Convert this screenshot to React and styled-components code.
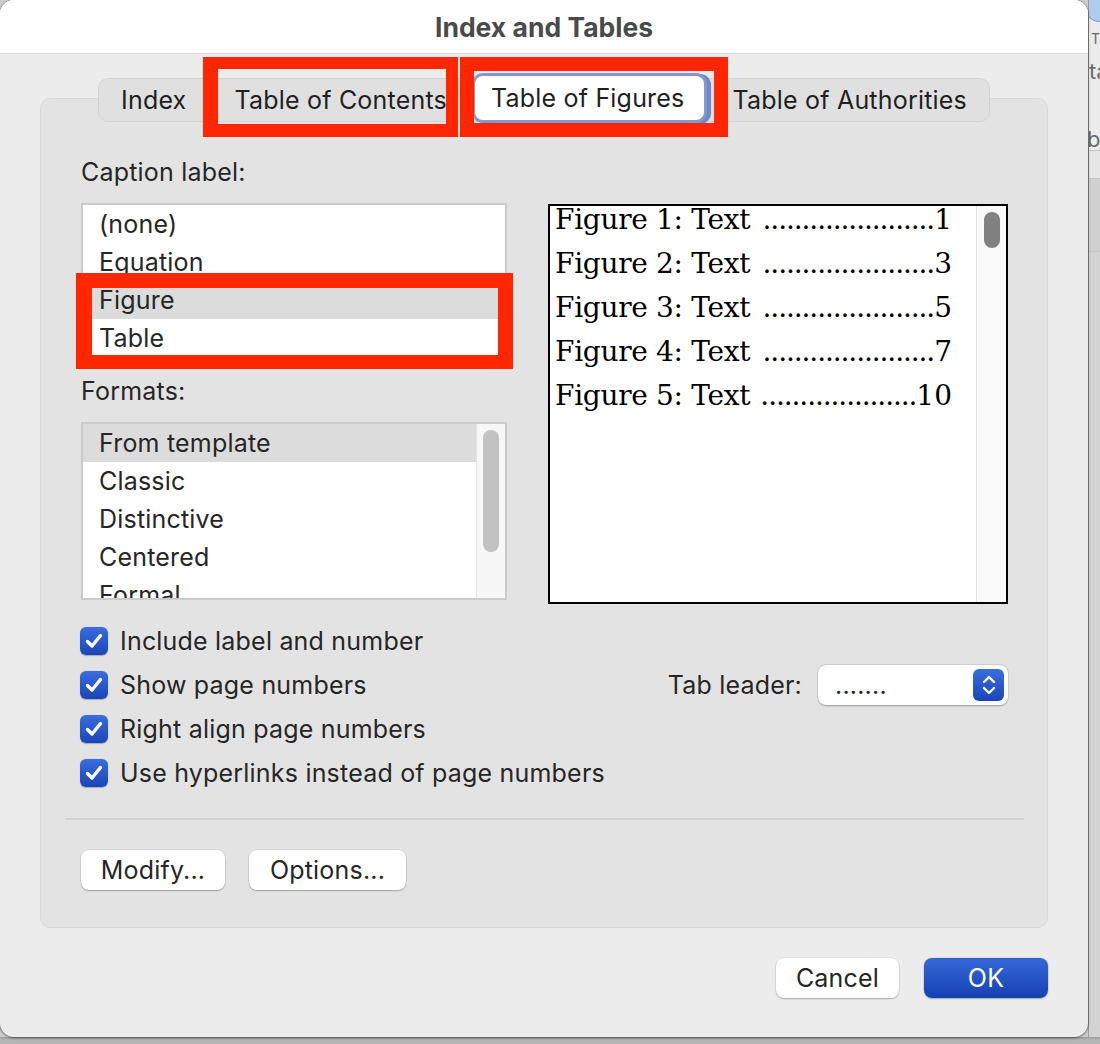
import React from "react";
import styled, { createGlobalStyle } from "styled-components";

const Global = createGlobalStyle`
  html, body { margin: 0; padding: 0; }
  body {
    background: #b4b4b4;
    font-family: Inter, "Noto Sans", "Liberation Sans", sans-serif;
    -webkit-font-smoothing: antialiased;
  }
`;

const Screen = styled.div`
  position: relative;
  width: 1100px;
  height: 1044px;
  overflow: hidden;
  display: flex;
  flex-direction: column;
`;

const TopRow = styled.div`
  display: flex;
  height: 1037px;
  flex: none;
  background: #cdcdcd;
`;

const Bottom = styled.div`
  flex: 1;
  background: linear-gradient(#9a9a9a, #b5b5b5 40%);
`;

const Dialog = styled.div`
  position: relative;
  z-index: 1;
  width: 1088px;
  flex: none;
  background: #ececec;
  border-radius: 14px;
  overflow: hidden;
  box-shadow: 0 0 0 1px rgba(0, 0, 0, 0.2), 0 1px 3px rgba(0, 0, 0, 0.35);
  display: flex;
  flex-direction: column;
`;

const TitleBar = styled.div`
  height: 53px;
  flex: none;
  background: #ffffff;
  border-bottom: 1px solid #d7d7d7;
  display: flex;
  align-items: center;
  justify-content: center;
  font-size: 26.5px;
  font-weight: 700;
  color: #4a4a4a;
`;

const Body = styled.div`
  padding: 24px 40px 0;
  display: flex;
  flex-direction: column;
`;

const Tabs = styled.div`
  position: relative;
  z-index: 2;
  align-self: center;
  width: 892px;
  height: 44px;
  margin-bottom: -24px;
  box-sizing: border-box;
  padding: 0 2px;
  display: flex;
  justify-content: space-between;
  background: #e0e0e0;
  border: 1px solid #d3d3d3;
  border-radius: 10px;
`;

const Tab = styled.div`
  display: flex;
  align-items: center;
  padding: 0 20px;
  font-size: 25px;
  letter-spacing: 0.2px;
  color: #1f1f1f;
  white-space: nowrap;
  ${(p) =>
    p.$active &&
    `
    background: #ffffff;
    border-radius: 8px;
    height: 44px;
    margin-top: -3px;
    padding: 0 20px 0 16px;
    box-shadow: 0 0 0 3px #8198d2, 4px 1px 0 3px #6f87c7;
  `}
`;

const Panel = styled.div`
  background: #e3e3e3;
  border: 1px solid #d8d8d8;
  border-radius: 10px;
  padding: 58px 39px 37px 40px;
  display: flex;
  flex-direction: column;
`;

const Columns = styled.div`
  display: grid;
  grid-template-columns: 426px 460px;
  column-gap: 41px;
`;

const Column = styled.div`
  display: flex;
  flex-direction: column;
`;

const Label = styled.div`
  font-size: 25px;
  letter-spacing: 0.2px;
  line-height: 30px;
  color: #262626;
  margin-top: ${(p) => p.$mt || 0}px;
`;

const ListBox = styled.div`
  margin-top: 16px;
  height: ${(p) => p.$h}px;
  box-sizing: border-box;
  border: 2px solid #cbcbcb;
  background: #ffffff;
  display: flex;
  overflow: hidden;
`;

const Items = styled.div`
  flex: 1;
`;

const Item = styled.div`
  height: 38px;
  line-height: 38px;
  padding-left: 16px;
  font-size: 25px;
  letter-spacing: 0.2px;
  color: #262626;
  white-space: nowrap;
  background: ${(p) => (p.$selected ? "#dcdcdc" : "transparent")};
`;

const Track = styled.div`
  flex: none;
  width: ${(p) => p.$w}px;
  box-sizing: border-box;
  background: ${(p) => p.$bg};
  border-left: 1px solid #e3e3e3;
  display: flex;
  justify-content: center;
`;

const Thumb = styled.div`
  width: 16px;
  height: ${(p) => p.$h}px;
  margin-top: 6px;
  border-radius: 8px;
  background: ${(p) => p.$c};
`;

const Preview = styled.div`
  margin-top: 47px;
  height: 400px;
  box-sizing: border-box;
  border: 2px solid #000000;
  background: #ffffff;
  display: flex;
  overflow: hidden;
`;

const PreviewText = styled.div`
  flex: 1;
  min-width: 0;
  padding: 0 24px 0 5px;
  margin-top: -8px;
  font-family: "DejaVu Serif", "Liberation Serif", serif;
  font-size: 28px;
  line-height: 44px;
  color: #000000;
`;

const Entry = styled.div`
  display: flex;
  white-space: nowrap;
`;

const EntryLabel = styled.span`
  margin-right: 5px;
  letter-spacing: -0.3px;
`;

const Leader = styled.span`
  flex: 1;
  overflow: hidden;
  direction: rtl;
  letter-spacing: -1.1px;
`;

const Checks = styled.div`
  margin-top: 15px;
  display: flex;
  flex-direction: column;
`;

const CheckRow = styled.div`
  height: 44px;
  display: flex;
  align-items: center;
  justify-content: space-between;
`;

const CheckLabel = styled.label`
  display: flex;
  align-items: center;
  gap: 12px;
  font-size: 25px;
  letter-spacing: 0.2px;
  color: #262626;
`;

const Box = styled.span`
  width: 28px;
  height: 28px;
  margin-left: -1px;
  border-radius: 6px;
  background: linear-gradient(#3a6ddf, #1a45b6);
  box-shadow: 0 0.5px 1px rgba(0, 0, 0, 0.25);
  display: flex;
  align-items: center;
  justify-content: center;
`;

const LeaderField = styled.div`
  display: flex;
  align-items: center;
  gap: 16px;
  font-size: 25px;
  letter-spacing: 0.2px;
  color: #262626;
`;

const Popup = styled.div`
  width: 190px;
  height: 40px;
  box-sizing: border-box;
  padding: 0 4px 0 17px;
  background: #ffffff;
  border-radius: 8px;
  box-shadow: 0 0.5px 1.5px rgba(0, 0, 0, 0.3), 0 0 0 0.5px rgba(0, 0, 0, 0.08);
  display: flex;
  align-items: center;
  justify-content: space-between;
  font-size: 25px;
  color: #262626;
`;

const Stepper = styled.span`
  width: 31px;
  height: 32px;
  border-radius: 6px;
  background: linear-gradient(#3a6ddf, #1a45b6);
  display: flex;
  align-items: center;
  justify-content: center;
`;

const Separator = styled.div`
  margin: 23px -16px 0;
  height: 2px;
  background: #d0d0d0;
`;

const ButtonRow = styled.div`
  margin-top: ${(p) => p.$mt}px;
  display: flex;
  justify-content: ${(p) => p.$justify || "flex-start"};
  gap: ${(p) => p.$gap}px;
`;

const Button = styled.button`
  width: ${(p) => p.$w}px;
  height: 40px;
  padding: 0;
  border: none;
  border-radius: 8px;
  font-family: inherit;
  font-size: 25px;
  letter-spacing: 0.2px;
  color: ${(p) => (p.$primary ? "#ffffff" : "#262626")};
  background: ${(p) =>
    p.$primary ? "linear-gradient(#3667d8, #1542b1)" : "#ffffff"};
  box-shadow: 0 1px 1.5px rgba(0, 0, 0, 0.25), 0 0 0 0.5px rgba(0, 0, 0, 0.1);
`;

const Strip = styled.div`
  flex: 1;
  overflow: hidden;
  display: flex;
  flex-direction: column;
  background: #d3d3d3;
  border-left: 1px solid #9c9c9c;
`;

const StripTop = styled.div`
  height: 150px;
  flex: none;
  background: #ececec;
  display: flex;
  flex-direction: column;
  border-bottom: 1px solid #c4c4c4;
`;

const Blob = styled.div`
  width: 26px;
  height: 26px;
  margin: -6px 0 0 -4px;
  border-radius: 50%;
  background: #b3cbed;
  border: 1px solid #6f93cc;
`;

const Frag = styled.div`
  margin: ${(p) => p.$m};
  font-size: ${(p) => p.$fs}px;
  color: #6b6b6b;
  white-space: nowrap;
  line-height: 1;
`;

const StripBand = styled.div`
  height: ${(p) => p.$h}px;
  flex: none;
  background: ${(p) => p.$bg};
  border-bottom: 1px solid #c6c6c6;
`;

const Mark = styled.div`
  position: absolute;
  z-index: 10;
  box-sizing: border-box;
  border-style: solid;
  border-color: #ff2600;
`;

const Check = () => (
  <svg width="22" height="22" viewBox="0 0 22 22">
    <path
      d="M4.5 11.5 L9 16 L17.5 5.5"
      fill="none"
      stroke="#fff"
      strokeWidth="3.4"
      strokeLinecap="round"
      strokeLinejoin="round"
    />
  </svg>
);

const Chevrons = () => (
  <svg width="18" height="26" viewBox="0 0 18 26">
    <path
      d="M4 10 L9 5 L14 10 M4 16 L9 21 L14 16"
      fill="none"
      stroke="#fff"
      strokeWidth="2.4"
      strokeLinecap="round"
      strokeLinejoin="round"
    />
  </svg>
);

const entries = [
  ["Figure 1: Text", "1", 22],
  ["Figure 2: Text", "3", 22],
  ["Figure 3: Text", "5", 22],
  ["Figure 4: Text", "7", 22],
  ["Figure 5: Text", "10", 20],
];

const checks = [
  "Include label and number",
  "Show page numbers",
  "Right align page numbers",
  "Use hyperlinks instead of page numbers",
];

export default function App() {
  return (
    <Screen>
      <Global />
      <TopRow>
        <Dialog>
          <TitleBar>Index and Tables</TitleBar>
          <Body>
            <Tabs>
              <Tab>Index</Tab>
              <Tab>Table of Contents</Tab>
              <Tab $active>Table of Figures</Tab>
              <Tab>Table of Authorities</Tab>
            </Tabs>
            <Panel>
              <Columns>
                <Column>
                  <Label>Caption label:</Label>
                  <ListBox $h={156}>
                    <Items>
                      <Item>(none)</Item>
                      <Item>Equation</Item>
                      <Item $selected>Figure</Item>
                      <Item>Table</Item>
                    </Items>
                  </ListBox>
                  <Label $mt={17}>Formats:</Label>
                  <ListBox $h={178}>
                    <Items>
                      <Item $selected>From template</Item>
                      <Item>Classic</Item>
                      <Item>Distinctive</Item>
                      <Item>Centered</Item>
                      <Item>Formal</Item>
                    </Items>
                    <Track $w={29} $bg="#f7f7f7">
                      <Thumb $h={122} $c="#c2c2c2" />
                    </Track>
                  </ListBox>
                </Column>
                <Column>
                  <Preview>
                    <PreviewText>
                      {entries.map(([t, n, d]) => (
                        <Entry key={t}>
                          <EntryLabel>{t}</EntryLabel>
                          <Leader>{".".repeat(d)}</Leader>
                          <span>{n}</span>
                        </Entry>
                      ))}
                    </PreviewText>
                    <Track $w={30} $bg="#f9f9f9">
                      <Thumb $h={36} $c="#808080" />
                    </Track>
                  </Preview>
                </Column>
              </Columns>
              <Checks>
                {checks.map((c, i) => (
                  <CheckRow key={c}>
                    <CheckLabel>
                      <Box>
                        <Check />
                      </Box>
                      {c}
                    </CheckLabel>
                    {i === 1 && (
                      <LeaderField>
                        Tab leader:
                        <Popup>
                          <span>.......</span>
                          <Stepper>
                            <Chevrons />
                          </Stepper>
                        </Popup>
                      </LeaderField>
                    )}
                  </CheckRow>
                ))}
              </Checks>
              <Separator />
              <ButtonRow $mt={30} $gap={24}>
                <Button $w={144}>Modify...</Button>
                <Button $w={157}>Options...</Button>
              </ButtonRow>
            </Panel>
            <ButtonRow $mt={30} $gap={25} $justify="flex-end">
              <Button $w={123}>Cancel</Button>
              <Button $w={124} $primary>
                OK
              </Button>
            </ButtonRow>
          </Body>
        </Dialog>
        <Strip>
          <StripTop>
            <Blob />
            <Frag $m="10px 0 0 2px" $fs={14}>T</Frag>
            <Frag $m="14px 0 0 0" $fs={22}>ta</Frag>
            <Frag $m="46px 0 0 -2px" $fs={22}>bic</Frag>
          </StripTop>
          <StripBand $h={27} $bg="#e6e6e6" />
          <StripBand $h={72} $bg="#d0d0d0" />
        </Strip>
      </TopRow>
      <Bottom />
      <Mark style={{ left: 203, top: 57, width: 255, height: 80, borderWidth: "12px 12px 13px 15px" }} />
      <Mark style={{ left: 460, top: 57, width: 268, height: 80, borderWidth: "14px" }} />
      <Mark style={{ left: 76, top: 273, width: 437, height: 96, borderWidth: "15px 15px 14px 16px" }} />
    </Screen>
  );
}
